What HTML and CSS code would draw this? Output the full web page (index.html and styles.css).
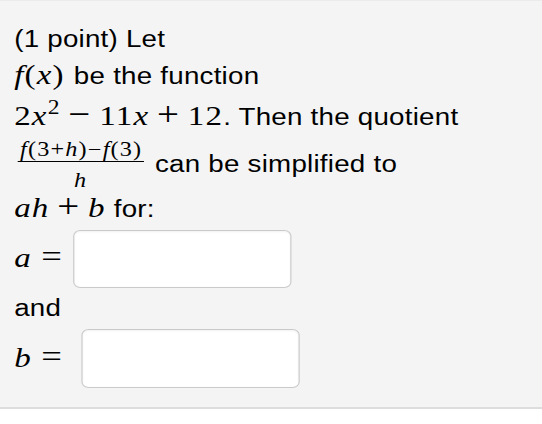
FILE: index.html
```html
<!DOCTYPE html>
<html>
<head>
<meta charset="utf-8">
<link rel="stylesheet" href="styles.css">
</head>
<body>
<div class="panel">
  <div class="content">
    <div class="row r1">(1 point) Let</div>
    <div class="row r2"><span class="math fx"><i>f</i>(<i>x</i>)</span> be the function</div>
    <div class="row r3"><span class="math">2<i>x</i><span class="sup">2</span><span class="op">−</span>11<i>x</i><span class="op">+</span>12</span>. Then the quotient</div>
    <div class="row r4"><span class="frac"><span class="num"><i>f</i>(3+<i>h</i>)−<i>f</i>(3)</span><span class="den"><i>h</i></span></span> can be simplified to</div>
    <div class="row r5"><span class="math"><i>a</i><i>h</i><span class="op">+</span><i>b</i></span> for:</div>
    <div class="field fa"><span class="label"><span class="math"><i>a</i><span class="rel">=</span></span></span><span class="box box-a"></span></div>
    <div class="row r7">and</div>
    <div class="field fb"><span class="label"><span class="math"><i>b</i><span class="rel">=</span></span></span><span class="box box-b"></span></div>
  </div>
</div>
</body>
</html>
```
FILE: styles.css
```css
html, body {
  margin: 0;
  padding: 0;
  background: #ffffff;
}

.panel {
  background: #f4f4f4;
  border-top: 1px solid #ebebeb;
  border-bottom: 2px solid #dddddd;
  padding: 19px 0 19px 0;
  overflow: hidden;
}

.content {
  padding-left: 12px;
  transform: scaleX(1.18);
  transform-origin: 0 0;
  font-family: "Liberation Sans", Arial, sans-serif;
  font-size: 23.5px;
  letter-spacing: 0.2px;
  color: #000;
}

.row {
  white-space: nowrap;
}

.r1 { height: 38px; line-height: 38px; }
.r2 { height: 37px; line-height: 37px; }
.r3 { height: 45px; line-height: 45px; }
.r4 { height: 48px; line-height: 48px; }
.r5 { height: 42px; line-height: 42px; }
.r7 { height: 41px; line-height: 41px; }

.math {
  font-family: "Liberation Serif", "Times New Roman", serif;
  font-size: 28px;
  line-height: 1;
  letter-spacing: 1px;
}

.fx {
  margin-right: 1px;
}

.math i {
  font-style: italic;
}

.sup {
  font-size: 20px;
  vertical-align: 11px;
  line-height: 0;
}

.op {
  font-size: 33px;
  line-height: 0;
  margin: 0 6.5px;
}

.rel {
  font-size: 31px;
  line-height: 0;
  margin-left: 8px;
}

.frac {
  display: inline-flex;
  flex-direction: column;
  align-items: center;
  vertical-align: middle;
  font-family: "Liberation Serif", "Times New Roman", serif;
  font-size: 20.5px;
  letter-spacing: 1px;
  margin-left: 3px;
  margin-right: 3px;
  position: relative;
  top: -1px;
}

.num {
  line-height: 20px;
  padding: 0 1px 2px 2px;
  border-bottom: 1.5px solid #000;
}

.den {
  line-height: 20px;
  padding-top: 8px;
}

.field {
  display: flex;
  align-items: center;
}

.fa { height: 58px; }
.fb { height: 59px; }

.label {
  line-height: 30px;
}

.box {
  display: block;
  width: 184.5px;
  background: #ffffff;
  border: 1.5px solid #cacaca;
  border-radius: 6px;
  box-sizing: border-box;
  box-shadow: inset 0 1px 2px rgba(0, 0, 0, 0.06);
}

.box-a {
  height: 58px;
  margin-left: 9px;
}

.box-b {
  height: 59px;
  margin-left: 16px;
}
```
